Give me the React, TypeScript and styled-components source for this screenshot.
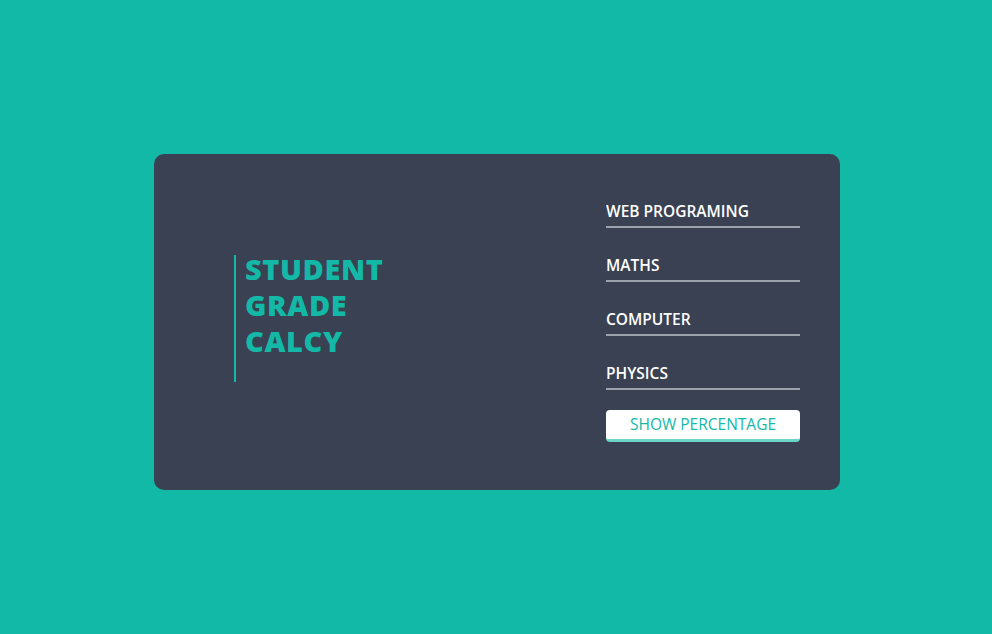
import React, { useState } from "react";
import styled, { createGlobalStyle } from "styled-components";

const GlobalStyle = createGlobalStyle`
   body {
      margin: 0;
      background: #13b9a7;
      font-family: "Open Sans", "Noto Sans", sans-serif;
   }
`;

const Page = styled.div`
   min-height: 100vh;
   box-sizing: border-box;
   padding-top: 154px;
   display: flex;
   justify-content: center;
   align-items: flex-start;
`;

const Card = styled.div`
   width: 686px;
   height: 336px;
   box-sizing: border-box;
   margin-left: 2px;
   padding: 0 40px 7px 80px;
   background: #394152;
   border-radius: 10px;
   display: flex;
   justify-content: space-between;
   align-items: center;
`;

const Title = styled.div`
   height: 127px;
   box-sizing: border-box;
   padding-left: 9px;
   border-left: 2px solid #14b8a6;
`;

const TitleText = styled.h1`
   margin: -4px 0 0;
   color: #14b8a6;
   font-size: 29px;
   font-weight: 800;
   line-height: 36px;
   letter-spacing: 0.6px;
   text-transform: uppercase;
`;

const Form = styled.div`
   width: 194px;
   display: flex;
   flex-direction: column;
   gap: 22px;
`;

const Field = styled.input`
   width: 100%;
   height: 32px;
   box-sizing: border-box;
   padding: 0;
   border: none;
   border-bottom: 2px solid #9ca3af;
   background: transparent;
   color: #fff;
   font-family: "Open Sans", "Noto Sans", sans-serif;
   font-size: 15.5px;
   font-weight: 600;
   outline: none;

   &::placeholder {
      color: #fff;
      opacity: 1;
   }
`;

const ShowButton = styled.button`
   margin-top: -2px;
   height: 32px;
   border: none;
   border-bottom: 3px solid #6dd5c7;
   border-radius: 4px;
   background: #fff;
   color: #14b8a6;
   font-family: "Open Sans", "Noto Sans", sans-serif;
   font-size: 15.5px;
   font-weight: 500;
   cursor: pointer;
`;

const subjects = ["Web Programing", "Maths", "Computer", "Physics"];

function App() {
   const [marks, setMarks] = useState<string[]>(["", "", "", ""]);

   return (
      <Page>
         <GlobalStyle />
         <Card>
            <Title>
               <TitleText>
                  Student
                  <br />
                  Grade
                  <br />
                  Calcy
               </TitleText>
            </Title>
            <Form>
               {subjects.map((item, index) => (
                  <Field
                     key={index}
                     placeholder={item.toUpperCase()}
                     value={marks[index]}
                     onChange={(e) => {
                        const next = [...marks];
                        next[index] = e.target.value;
                        setMarks(next);
                     }}
                  />
               ))}
               <ShowButton>SHOW PERCENTAGE</ShowButton>
            </Form>
         </Card>
      </Page>
   );
}

export default App;
